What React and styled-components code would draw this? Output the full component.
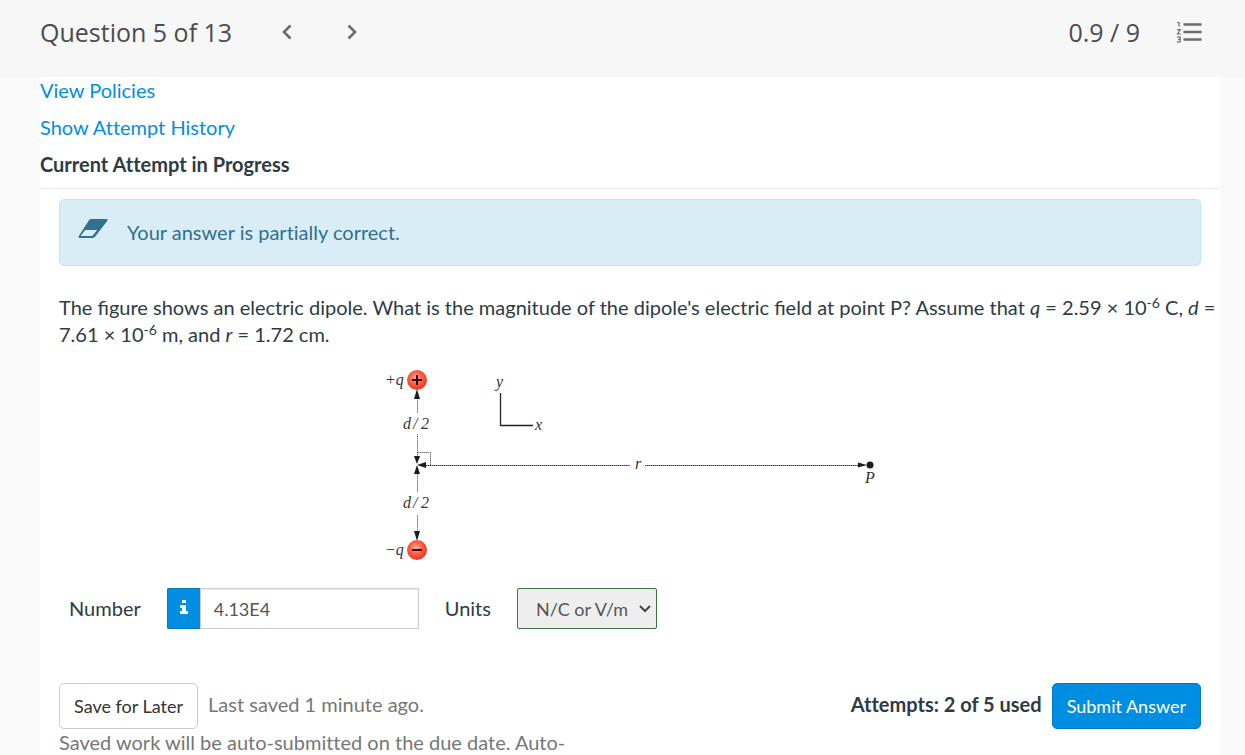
import React, { useState } from 'react';
import styled, { createGlobalStyle } from 'styled-components';

const App = () => {
    const [answer, setAnswer] = useState('4.13E4'); // Numeric answer
    const [unit, setUnit] = useState('N/C or V/m'); // Selected unit

    return (
        <>
            <GlobalStyle />
            <Header>
                <Title>Question 5 of 13</Title>
                <IconButton type="button" aria-label="Previous question">
                    <svg width="20" height="20" viewBox="0 0 20 20">
                        <path d="M13.5 3.5L7 10L13.5 16.5" fill="none" stroke="#6c6c6c" strokeWidth="2.6" />
                    </svg>
                </IconButton>
                <IconButton type="button" aria-label="Next question">
                    <svg width="20" height="20" viewBox="0 0 20 20">
                        <path d="M6.5 3.5L13 10L6.5 16.5" fill="none" stroke="#6c6c6c" strokeWidth="2.6" />
                    </svg>
                </IconButton>
                <Score>0.9 / 9</Score>
                <IconButton type="button" aria-label="Question list">
                    <ListIcon />
                </IconButton>
            </Header>

            <Main>
                <Links>
                    <a href="#policies">View Policies</a>
                    <a href="#history">Show Attempt History</a>
                    <Progress>Current Attempt in Progress</Progress>
                </Links>

                <Content>
                    <Alert role="status">
                        <EraserIcon />
                        Your answer is partially correct.
                    </Alert>

                    <Question>
                        The figure shows an electric dipole. What is the magnitude of the dipole's electric field at
                        point P? Assume that <i>q</i> = 2.59 × 10<sup>-6</sup> C, <i>d</i>{' = '}
                        <span>7.61 × 10<sup>-6</sup> m, and <i>r</i> = 1.72 cm.</span>
                    </Question>

                    <Figure>
                        <DipoleDiagram />
                    </Figure>

                    <AnswerRow>
                        <label htmlFor="number">Number</label>
                        <InputGroup>
                            <InfoButton type="button" aria-label="Information">
                                <svg width="8" height="14" viewBox="0 0 8 14">
                                    <path d="M2 0H6V3H2ZM0 5H6V11H8V14H0V11H2V8H0Z" fill="#fff" />
                                </svg>
                            </InfoButton>
                            <NumberInput
                                id="number"
                                type="text"
                                value={answer}
                                onChange={(e) => setAnswer(e.target.value)}
                            />
                        </InputGroup>
                        <label htmlFor="units">Units</label>
                        <SelectWrapper>
                            <UnitSelect id="units" value={unit} onChange={(e) => setUnit(e.target.value)}>
                                <option>N/C or V/m</option>
                                <option>N</option>
                                <option>C</option>
                            </UnitSelect>
                            <svg width="12" height="8" viewBox="0 0 12 8" aria-hidden="true">
                                <path d="M1 1L6 6L11 1" fill="none" stroke="#444" strokeWidth="2" />
                            </svg>
                        </SelectWrapper>
                    </AnswerRow>

                    <Footer>
                        <SaveArea>
                            <SaveRow>
                                <Button type="button">Save for Later</Button>
                                <span>Last saved 1 minute ago.</span>
                            </SaveRow>
                            <SaveNote>Saved work will be auto-submitted on the due date. Auto-</SaveNote>
                        </SaveArea>
                        <SubmitArea>
                            <strong>Attempts: 2 of 5 used</strong>
                            <Button type="button" $primary>Submit Answer</Button>
                        </SubmitArea>
                    </Footer>
                </Content>
            </Main>
        </>
    );
};

// Numbered list
const ListIcon = () => (
    <svg width="26" height="22" viewBox="0 0 26 22" fill="none" stroke="#6c6c6c">
        <path d="M7.5 3.5H25.5M7.5 11H25.5M7.5 18.5H25.5" strokeWidth="2.6" />
        <path d="M1 1.5H3V5.5M1 8.7H4.2L1.5 13H5M1 16.2H4.2V20.8H1M2 18.5H4.2" strokeWidth="1.2" />
    </svg>
);

// Eraser shown in the partially correct alert
const EraserIcon = () => (
    <svg width="30" height="20" viewBox="0 0 30 20" aria-hidden="true">
        <path
            d="M13 0H28.5Q30.5 0.3 29 2.2L17 17.8Q15.8 19 14 19H2Q-0.3 18.8 1 16.7L11 1.2Q11.8 0 13 0ZM7.2 10.9L2.5 17H14.3L19.2 10.9Z"
            fill="#31708f"
            fillRule="evenodd"
        />
    </svg>
);

// Dipole on the left, field point P on the right
const DipoleDiagram = () => (
    <DiagramSvg viewBox="380 366 500 198" role="img" aria-label="Electric dipole">
        <defs>
            <radialGradient id="charge" cx="45%" cy="40%" r="60%">
                <stop offset="0%" stopColor="#ffb09a" />
                <stop offset="50%" stopColor="#ff5f45" />
                <stop offset="100%" stopColor="#ee3323" />
            </radialGradient>
        </defs>

        <g stroke="#777" strokeWidth="1" strokeDasharray="1.5 0.5" fill="none">
            <path d="M417.5 398V413M417.5 434V457M417.5 472V492M417.5 515V533" />
            <path d="M417.5 452.5H430.5V465" />
            <path d="M424 465.5H630M645 465.5H860" stroke="#333" />
        </g>
        <g fill="#1c1c1c">
            <path d="M417 389L420 399H414ZM417 464L414 456H420ZM417 465L420 474H414ZM417 541L414 531H420Z" />
            <path d="M417 465L426 462V468ZM867 465L858 462.5V467.5Z" />
            <circle cx="870" cy="465" r="3.5" />
        </g>

        <circle cx="417" cy="380" r="10" fill="url(#charge)" />
        <circle cx="417" cy="550" r="10" fill="url(#charge)" />
        <path d="M412 380H422M417 375V385M412 550H422" stroke="#2b0d0a" strokeWidth="2" />
        <path d="M500.5 393V425.5H533" fill="none" stroke="#222" strokeWidth="1.3" />

        <text x="385" y="385">+q</text>
        <text x="385" y="555">−q</text>
        <text x="403" y="429">d</text>
        <text x="413" y="429">/</text>
        <text x="421" y="429">2</text>
        <text x="403" y="508">d</text>
        <text x="413" y="508">/</text>
        <text x="421" y="508">2</text>
        <text x="496" y="387">y</text>
        <text x="535" y="430">x</text>
        <text x="635" y="469">r</text>
        <text x="865" y="483">P</text>
    </DiagramSvg>
);

const GlobalStyle = createGlobalStyle`
  * {
    box-sizing: border-box;
  }
  body {
    margin: 0;
    background: #fafafa;
    color: #2d3b45;
    font-family: Lato, sans-serif;
    font-size: 20px;
    font-variant-ligatures: none;
    line-height: 27px;
  }
  a {
    color: #008ee2;
    text-decoration: none;
  }
  a:hover {
    text-decoration: underline;
  }
  button, input, select {
    font-family: inherit;
    font-size: 18px;
  }
`;

const Header = styled.header`
  display: flex;
  align-items: center;
  padding: 11px 35px 24px 40px;
  background: #f7f7f7;
  color: #4c4c4c;
  font-family: "Open Sans", sans-serif;
  font-size: 25px;
`;

const Title = styled.h1`
  margin: 0 34px 0 0;
  font-size: inherit;
  font-weight: 400;
`;

const IconButton = styled.button`
  display: flex;
  align-items: center;
  justify-content: center;
  height: 42px;
  min-width: 42px;
  padding: 0;
  border: none;
  background: none;
  cursor: pointer;

  & + & {
    margin-left: 23px;
  }
`;

const Score = styled.div`
  margin: 0 28px 0 auto;
`;

const Main = styled.main`
  margin: 0 25px 0 40px;
  background: #fff;
`;

const Links = styled.div`
  display: flex;
  flex-direction: column;
  align-items: flex-start;
  gap: 10px;
  padding-bottom: 10px;
  border-bottom: 1px solid #ececec;
`;

const Progress = styled.strong`
  font-weight: 700;
`;

const Content = styled.div`
  padding: 10px 0 0 19px;
`;

const Alert = styled.div`
  display: flex;
  align-items: center;
  gap: 19px;
  min-height: 67px;
  margin-right: 19px;
  padding: 0 18px;
  border: 1px solid #bce8f1;
  border-radius: 5px;
  background: #d9edf7;
  color: #31708f;

  svg {
    margin-bottom: 8px;
  }
`;

const Question = styled.p`
  margin: 28px 0 0;
  font-variant-ligatures: normal;

  span {
    display: inline-block;
  }
  sup {
    font-size: 14px;
    line-height: 0;
    vertical-align: 7px;
  }
`;

const Figure = styled.figure`
  display: flex;
  justify-content: center;
  margin: 18px 19px 24px 0;
`;

const DiagramSvg = styled.svg`
  width: 500px;
  max-width: 100%;

  text {
    fill: #333;
    font-family: "Liberation Serif", serif;
    font-size: 16px;
    font-style: italic;
  }
`;

const AnswerRow = styled.div`
  display: flex;
  align-items: center;
  gap: 26px;
  padding: 0 10px;
`;

const InputGroup = styled.div`
  display: flex;
  width: 252px;
  height: 41px;
`;

const InfoButton = styled.button`
  display: flex;
  align-items: center;
  justify-content: center;
  width: 33px;
  padding: 0 0 3px 1px;
  border: 1px solid #0079c1;
  border-right: none;
  border-radius: 2px 0 0 2px;
  background: #008ee2;
`;

const NumberInput = styled.input`
  flex: 1;
  min-width: 0;
  padding: 0 13px;
  border: 1px solid #ccc;
  color: #555;
  box-shadow: inset 0 1px 1px rgba(0, 0, 0, 0.08);
`;

const SelectWrapper = styled.div`
  position: relative;
  display: flex;

  svg {
    position: absolute;
    top: 17px;
    right: 6px;
    pointer-events: none;
  }
`;

const UnitSelect = styled.select`
  appearance: none;
  width: 140px;
  height: 41px;
  padding: 0 22px 0 18px;
  border: 1px solid #3c763d;
  border-radius: 2px;
  background: #eee;
  color: #555;
`;

const Footer = styled.div`
  display: flex;
  align-items: flex-start;
  justify-content: space-between;
  margin: 54px 19px 0 0;
`;

const SaveArea = styled.div`
  color: #777;
`;

const SaveRow = styled.div`
  display: flex;
  align-items: center;
  gap: 10px;

  span {
    margin-bottom: 4px;
  }
`;

const SaveNote = styled.div`
  margin-top: 1px;
  line-height: 25px;
`;

const SubmitArea = styled.div`
  display: flex;
  align-items: center;
  gap: 10px;

  strong {
    margin-bottom: 4px;
  }
`;

const Button = styled.button`
  height: 46px;
  padding: 0 14px;
  border: 1px solid ${(props) => (props.$primary ? '#0079c1' : '#ccc')};
  border-radius: 5px;
  background: ${(props) => (props.$primary ? '#008ee2' : '#fff')};
  color: ${(props) => (props.$primary ? '#fff' : '#333')};
  cursor: pointer;
`;

export default App;
